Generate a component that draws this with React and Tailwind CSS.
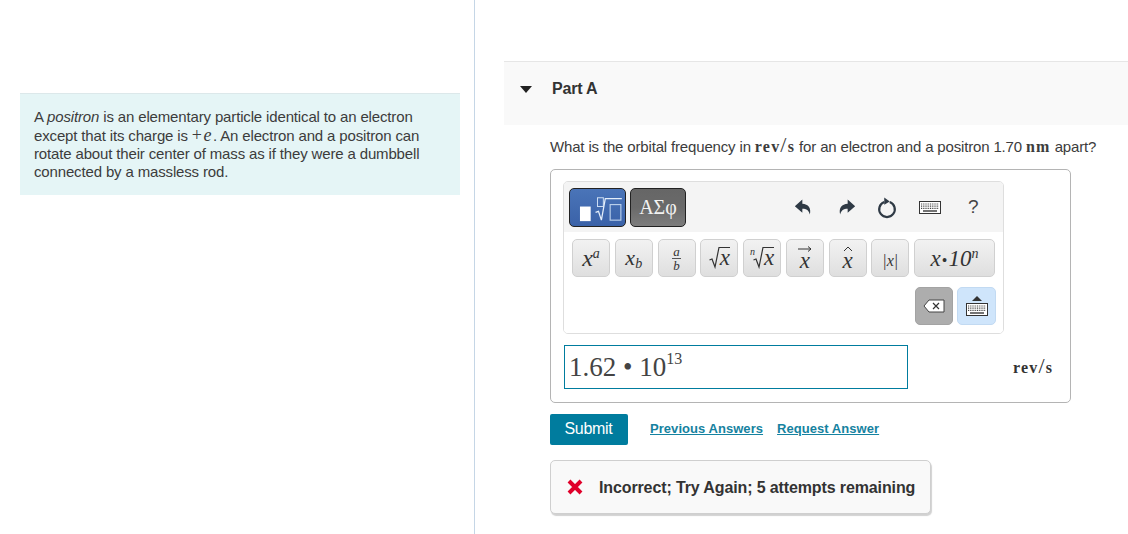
import React from 'react';

const sans = "font-['Liberation_Sans',Arial,sans-serif]";
const serif = "font-['Liberation_Serif','DejaVu_Serif',serif]";

const KeyboardIcon = ({ className = '' }) => (
  <svg viewBox="0 0 22 13" className={className}>
    <rect x="0.5" y="0.5" width="21" height="12" fill="#fff" stroke="#333" />
    <path d="M2 3h18M2 5.2h18M2 7.4h18" stroke="#444" strokeWidth="1.2" strokeDasharray="1 0.8" />
    <path d="M4 10h14" stroke="#444" strokeWidth="1.4" />
  </svg>
);

// radical sign plus its x
const Radical = () => (
  <span className="flex items-start">
    <svg viewBox="0 0 11 22" className="w-[11px] h-[22px] shrink-0"><path d="M0.500 13l2.500-1 3 8L10 0.500h1" fill="none" stroke="#333" strokeWidth="1.200" /></svg>
    <span className="border-t border-[#333] text-[23px] leading-[20px] h-[21px]">x</span>
  </span>
);

// math palette button, width changes per key
const MathKey = ({ width = 'w-[38px]', children }) => (
  <div className={`${width} h-[38px] shrink-0 rounded-[5px] border border-[#d0d0d0] bg-gradient-to-b from-[#f2f2f2] to-[#dfdfdf] flex items-center justify-center ${serif} italic text-[#333]`}>
    {children}
  </div>
);

// x with a small drawing above it (vector arrow, hat)
const AccentX = ({ children }) => (
  <span className="flex flex-col items-center">
    {children}
    <span className="text-[23px] leading-[17px] h-[19px]">x</span>
  </span>
);

const Palette = () => (
  <div className="w-[441px] h-[153px] rounded-[5px] border border-[#dedede] ml-[12px] overflow-hidden">
    <div className="h-[50px] bg-[#f4f4f4] flex items-center pl-[5px]">
      <div className="w-[57px] h-[39px] rounded-[5px] border border-[#222] bg-gradient-to-b from-[#4a74b8] to-[#3a62a8] flex items-center justify-center">
        <svg viewBox="0 0 56 38" className="w-[55px] h-[37px]">
          <rect x="10" y="18" width="11" height="15" fill="#fff" />
          <rect x="28" y="9" width="6" height="9" fill="none" stroke="#cfe0f5" strokeWidth="1" />
          <path d="M26 24l3 -1 3 9 4 -22h17" fill="none" stroke="#e4eefa" strokeWidth="1.3" />
          <rect x="41" y="16" width="11" height="16" fill="none" stroke="#b9cfea" strokeWidth="1.2" />
        </svg>
      </div>
      <div className={`ml-[4px] w-[56px] h-[39px] rounded-[5px] border border-[#222] bg-gradient-to-b from-[#666] via-[#6a6a6a] to-[#7d7d7d] flex items-center justify-center text-[#f2f2f2] text-[20px] ${serif}`}>
        ΑΣφ
      </div>
      <div className="ml-[108px] flex items-center">
        <svg viewBox="0 0 24 24" className="w-[20px] h-[20px]" fill="#2f3a45"><path d="M10 3 1 11l9 8v-5c5 0 8 2 9 7 2-8-2-12.500-9-13z" /></svg>
        <svg viewBox="0 0 24 24" className="ml-[22px] w-[20px] h-[20px]" fill="#2f3a45"><path d="M14 3l9 8-9 8v-5c-5 0-8 2-9 7-2-8 2-12.500 9-13z" /></svg>
        <svg viewBox="0 0 24 24" className="ml-[20px] w-[22px] h-[24px]" fill="none" stroke="#2f3a45" strokeWidth="2.400"><path d="M15 6.500a8.500 8.500 0 1 1-6 0" /><path d="M9 1.500l6 4.500-6 3.500z" fill="#2f3a45" stroke="none" /></svg>
        <KeyboardIcon className="ml-[21px] w-[22px] h-[13px]" />
        <span className={`ml-[27px] text-[19px] text-[#444] ${sans}`}>?</span>
      </div>
    </div>
    <div className="h-[102px] bg-white pl-[8px] pt-[7px]">
      <div className="flex gap-[4.750px]">
        <MathKey><span className="text-[24px] leading-none">x<sup className="text-[14px] -top-[8px]">a</sup></span></MathKey>
        <MathKey><span className="text-[22px] leading-none">x<sub className="text-[14px] -bottom-[3px]">b</sub></span></MathKey>
        <MathKey>
          <span className="flex flex-col items-center text-[13px] leading-[13px]">
            <span>a</span><span className="w-[9px] h-px bg-[#555]"></span><span>b</span>
          </span>
        </MathKey>
        <MathKey><Radical /></MathKey>
        <MathKey>
          <span className="flex items-start">
            <span className="text-[10px] leading-[9px] w-[6px] -mr-[3px]">n</span>
            <Radical />
          </span>
        </MathKey>
        <MathKey>
          <AccentX>
            <svg viewBox="0 0 14 6" className="w-[14px] h-[6px]"><path d="M0 3h13M10 0.500L13 3l-3 2.500" fill="none" stroke="#333" /></svg>
          </AccentX>
        </MathKey>
        <MathKey>
          <AccentX>
            <svg viewBox="0 0 10 6" className="w-[10px] h-[6px]"><path d="M1 5l4-4 4 4" fill="none" stroke="#333" /></svg>
          </AccentX>
        </MathKey>
        <MathKey><span className="text-[16px] pt-[6px]">|x|</span></MathKey>
        <MathKey width="w-[81px]"><span className="text-[23px] leading-none">x<span className="not-italic text-[16px] px-[1px]">•</span>10<sup className="text-[14px] -top-[8px]">n</sup></span></MathKey>
      </div>
      <div className="mt-[10px] flex justify-end pr-[7px] gap-[4px]">
        <div className="w-[38px] h-[38px] rounded-[5px] bg-[#adadad] border border-[#a3a3a3] flex items-center justify-center">
          <svg viewBox="0 0 22 14" className="w-[22px] h-[14px]">
            <path d="M6 1h15v12H6L1 7z" fill="#fff" stroke="#444" />
            <path d="M10 4l6 6M16 4l-6 6" stroke="#333" strokeWidth="1.200" />
          </svg>
        </div>
        <div className="w-[39px] h-[38px] rounded-[5px] bg-[#cfe5fb] border border-[#c2daf2] flex flex-col items-center justify-center gap-[2px]">
          <svg viewBox="0 0 10 5" className="w-[10px] h-[5px]"><path d="M0 5l5-5 5 5z" fill="#333" /></svg>
          <KeyboardIcon className="w-[22px] h-[13px]" />
        </div>
      </div>
    </div>
  </div>
);

// units set in the math font
const Unit = ({ children }) => (
  <span className={`${serif} font-bold text-[16px] tracking-[1.200px]`}>{children}</span>
);

const RevPerSec = () => (
  <Unit>rev<span className="font-normal text-[22px] leading-none">/</span>s</Unit>
);

const App = () => {
  return (
    <div className={`w-[1128px] h-[534px] bg-white flex overflow-hidden ${sans} text-[#333]`}>
      {/* intro column */}
      <div className="w-[475px] h-full shrink-0 border-r border-[#c5d6e6] pt-[93px] pl-[20px]">
        <div className="w-[440px] h-[102px] bg-[#e5f5f6] border-t border-[#dce8ea] pl-[14px] pt-[14px] text-[15px] leading-[18px] tracking-[-0.15px] text-[#3c3c3c]">
          <p>A <em>positron</em> is an elementary particle identical to an electron</p>
          <p>except that its charge is <span className={`${serif} text-[18px] tracking-[1.500px]`}>+<em>e</em></span>. An electron and a positron can</p>
          <p>rotate about their center of mass as if they were a dumbbell</p>
          <p>connected by a massless rod.</p>
        </div>
      </div>

      {/* part A */}
      <div className="flex-1 pt-[61px] pl-[29px]">
        <div className="h-[64px] bg-[#f9f9f9] border-t border-[#e6e6e6] flex items-start pt-[17px] pl-[16px]">
          <svg viewBox="0 0 12 7" className="w-[12px] h-[7px] mt-[7px]"><path d="M0 0h12L6 7z" fill="#222" /></svg>
          <span className="ml-[20px] text-[16px] font-bold leading-[20px] tracking-[-0.2px] text-[#333]">Part A</span>
        </div>
        <div className="pl-[46px]">
          <p className="mt-[9px] h-[20px] text-[15px] leading-[20px] tracking-[-0.16px] whitespace-nowrap text-[#3c3c3c]">
            What is the orbital frequency in <RevPerSec /> for an electron and a positron 1.70 <Unit>nm</Unit> apart?
          </p>
          <div className="mt-[15px] w-[521px] h-[234px] rounded-[5px] border border-[#b4b4b4] pt-[11px]">
            <Palette />
            <div className="mt-[11px] flex items-center ml-[13px]">
              <div className={`w-[344px] h-[44px] border border-[#007c9e] pl-[4px] flex items-center text-[27px] leading-none text-[#444] ${serif}`}>
                1.62 • 10<sup className="text-[16px] -top-[8px]">13</sup>
              </div>
              <span className="ml-[105px]"><RevPerSec /></span>
            </div>
          </div>
          <div className="mt-[11px] flex items-center">
            <button className="w-[78px] h-[31px] pb-[2px] pr-[1px] rounded-[2px] bg-[#007c9e] text-white text-[16px] tracking-[-0.3px]">Submit</button>
            <a className="ml-[22px] mb-[2px] text-[13px] font-bold underline tracking-[0.05px] text-[#1582a0]">Previous Answers</a>
            <a className="ml-[14px] mb-[2px] text-[13px] font-bold underline tracking-[0.05px] text-[#1582a0]">Request Answer</a>
          </div>
          <div className="mt-[15px] w-[381px] h-[54px] rounded-[5px] border border-[#cfcfcf] bg-[#f9f9f9] shadow-[1px_2px_1px_rgba(0,0,0,0.18)] flex items-center pl-[16px]">
            <svg viewBox="0 0 16 16" className="w-[16px] h-[16px] shrink-0"><path d="M2 2l12 12M14 2L2 14" stroke="#e0002a" strokeWidth="4" /></svg>
            <span className="ml-[16px] pt-[2px] text-[16px] font-bold tracking-[-0.12px] text-[#333] whitespace-nowrap">Incorrect; Try Again; 5 attempts remaining</span>
          </div>
        </div>
      </div>
    </div>
  );
};

export default App;
